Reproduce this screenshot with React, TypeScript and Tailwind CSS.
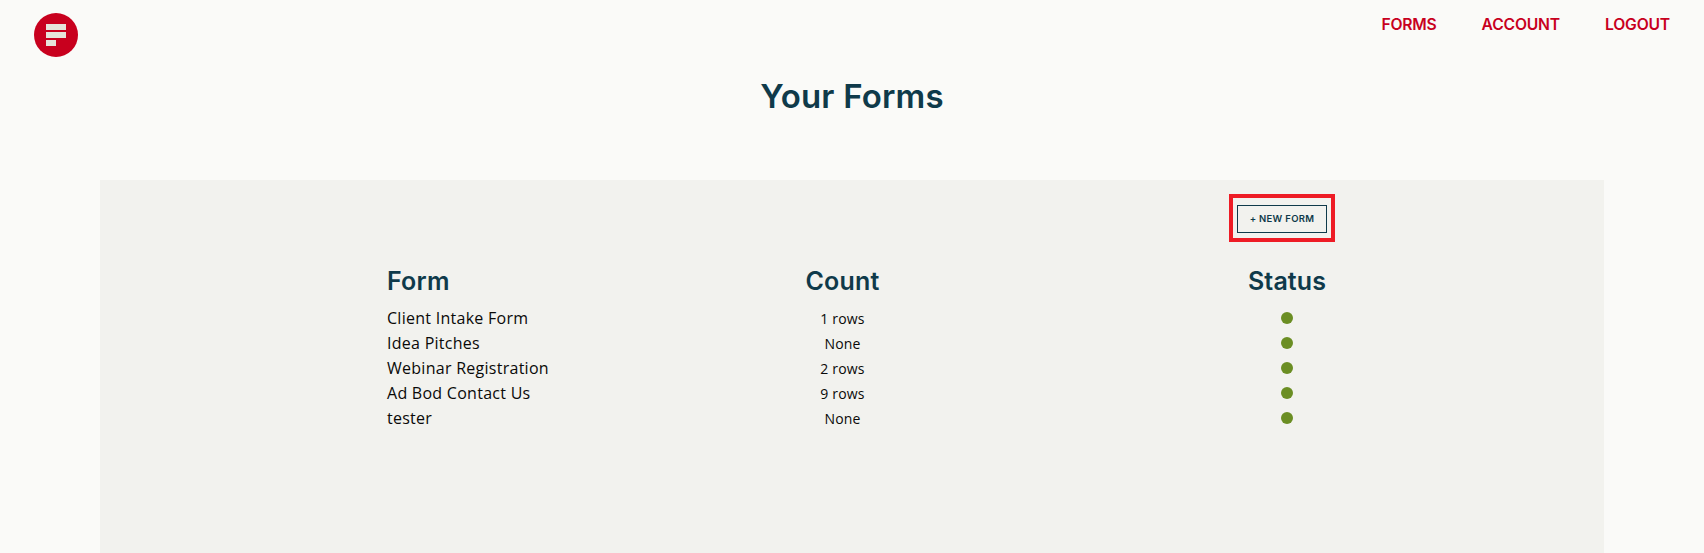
const rows = [
  ["Client Intake Form", "1 rows"],
  ["Idea Pitches", "None"],
  ["Webinar Registration", "2 rows"],
  ["Ad Bod Contact Us", "9 rows"],
  ["tester", "None"],
];

const heading = "font-['Inter',sans-serif]";
const body = "font-['Open_Sans',sans-serif]";

function Logo() {
  return (
    <svg width="44" height="44" viewBox="0 0 44 44">
      <circle cx="22" cy="22" r="22" fill="#c8001e" />
      <rect x="12" y="11" width="20" height="6" fill="#e6e3da" />
      <rect x="12" y="19" width="20" height="6" fill="#e6e3da" />
      <rect x="12" y="27" width="10" height="6" fill="#e6e3da" />
    </svg>
  );
}

export default function App() {
  return (
    <div className="flex h-screen flex-col overflow-hidden bg-[#fafaf8]">
      <header className="flex h-[70px] items-start justify-between pl-[34px] pr-[34px]">
        <div className="pt-[13px]">
          <Logo />
        </div>
        <nav className={`${heading} flex gap-[45px] pt-[15px] text-[15.7px] leading-[20px] font-semibold tracking-[-0.2px] text-[#c8001e]`}>
          <a>FORMS</a>
          <a>ACCOUNT</a>
          <a>LOGOUT</a>
        </nav>
      </header>
      <h1 className={`${heading} h-[110px] pt-[4px] text-center text-[33px] leading-[44px] font-semibold tracking-[0.2px] text-[#0f3a4a]`}>
        Your Forms
      </h1>
      <main className="mx-[100px] flex-1 bg-[#f2f2ee] pt-[14px]">
        <div className="flex justify-end pr-[269px]">
          <div className="border-4 border-[#ee1c25] px-1 pt-[7px] pb-[5px]">
            <button className={`${heading} flex h-[28px] w-[90px] items-center justify-center border border-[#0f3a4a] text-[9.5px] font-semibold tracking-[0.3px] text-[#0f3a4a]`}>
              + NEW FORM
            </button>
          </div>
        </div>
        <div className="ml-[287px] mt-[22px] grid w-[1122px] grid-cols-[233px_445px_444px]">
          <div className={`${heading} text-[25px] leading-[34px] font-semibold tracking-[0.2px] text-[#0f3a4a]`}>Form</div>
          <div className={`${heading} text-center text-[25px] leading-[34px] font-semibold tracking-[0.2px] text-[#0f3a4a]`}>Count</div>
          <div className={`${heading} text-center text-[25px] leading-[34px] font-semibold tracking-[0.1px] text-[#0f3a4a]`}>Status</div>
          <div className="col-span-3 h-[8px]" />
          {rows.map(([name, count]) => (
            <div key={name} className={`${body} contents text-[#0a0a09]`}>
              <div className="text-[16px] leading-[25px] font-medium tracking-[0.27px]">{name}</div>
              <div className="text-center text-[14px] leading-[25px] font-medium tracking-[0.2px]">{count}</div>
              <div className="-mt-px flex h-[25px] items-center justify-center">
                <span className="size-3 rounded-full bg-[#6b8e23]" />
              </div>
            </div>
          ))}
        </div>
      </main>
    </div>
  );
}
